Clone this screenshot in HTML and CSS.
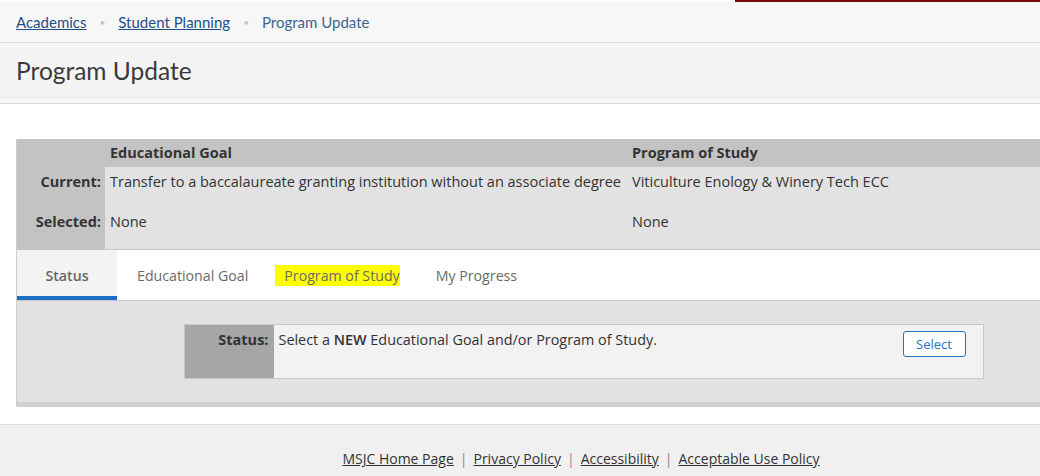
FILE: index.html
```html
<!DOCTYPE html>
<html lang="en">
<head>
<meta charset="utf-8">
<title>Program Update</title>
<link rel="stylesheet" href="styles.css">
</head>
<body>
<div class="page">
  <div class="topstrip"><div class="topspace"></div><div class="redbar"></div></div>
  <nav class="breadcrumb">
    <a href="#">Academics</a><span class="sep">•</span><a href="#">Student Planning</a><span class="sep">•</span><span class="crumb-current">Program Update</span>
  </nav>
  <header class="titlebar"><h1>Program Update</h1></header>
  <div class="titleshadow"></div>

  <main class="main">
    <section class="summary">
      <div class="sum-row sum-head">
        <div class="sum-label"></div>
        <div class="sum-cell goal">Educational Goal</div>
        <div class="sum-cell">Program of Study</div>
      </div>
      <div class="sum-row">
        <div class="sum-label">Current:</div>
        <div class="sum-cell goal">Transfer to a baccalaureate granting institution without an associate degree</div>
        <div class="sum-cell">Viticulture Enology &amp; Winery Tech ECC</div>
      </div>
      <div class="sum-row last">
        <div class="sum-label">Selected:</div>
        <div class="sum-cell goal">None</div>
        <div class="sum-cell">None</div>
      </div>
    </section>

    <div class="tabs">
      <div class="tab active">Status</div>
      <div class="tab">Educational Goal</div>
      <div class="tab"><span class="hl">Program of Study</span></div>
      <div class="tab">My Progress</div>
    </div>

    <section class="tabpanel">
      <div class="statusbox">
        <div class="status-label">Status:</div>
        <div class="status-body">
          <span>Select a <b>NEW</b> Educational Goal and/or Program of Study.</span>
          <button class="btn">Select</button>
        </div>
      </div>
    </section>
  </main>

  <footer class="footer">
    <a href="#">MSJC Home Page</a><span class="bar">|</span><a href="#">Privacy Policy</a><span class="bar">|</span><a href="#">Accessibility</a><span class="bar">|</span><a href="#">Acceptable Use Policy</a>
  </footer>
</div>
</body>
</html>
```

FILE: styles.css
```css
html, body {
  margin: 0;
  padding: 0;
  overflow: hidden;
  background: #fff;
}
body {
  font-family: "Open Sans", "Liberation Sans", sans-serif;
  font-size: 14px;
  color: #333;
}
.page {
  width: 1150px;
  height: 476px;
  display: flex;
  flex-direction: column;
}
.page > * { flex-shrink: 0; }
.topstrip {
  display: flex;
  height: 2px;
  background: #fff;
}
.topspace { width: 735px; }
.redbar { flex: 1; background: #7b0b0b; }

.breadcrumb {
  height: 40px;
  background: #f7f7f7;
  border-bottom: 1px solid #dcdcdc;
  display: flex;
  align-items: center;
  padding-left: 16px;
  font-family: "Lato", "Open Sans", sans-serif;
  font-size: 15px;
}
.breadcrumb a {
  color: #1d4f8a;
  text-decoration: underline;
}
.breadcrumb .sep {
  color: #c4c4c4;
  font-size: 10px;
  margin: 0 13px;
}
.crumb-current { color: #40658c; }

.titlebar {
  height: 54px;
  background: #f4f4f4;
  border-bottom: 1px solid #e9e9e9;
  display: flex;
  align-items: center;
  padding-left: 16px;
}
.titlebar h1 {
  margin: 0;
  font-family: "Lato", "Open Sans", sans-serif;
  font-weight: 400;
  font-size: 24.5px;
  color: #3a3a3a;
}
.titleshadow {
  height: 5px;
  background: #f6f6f6;
  border-bottom: 1px solid #d9d9d9;
}

.main {
  margin: 35px 0 0 16px;
  border-left: 1px solid #cfcfcf;
  display: flex;
  flex-direction: column;
}

.summary { background: #e2e2e2; border-bottom: 1px solid #c6c6c6; font-size: 14.5px; }
.sum-row {
  display: grid;
  grid-template-columns: 88px 522px 1fr;
  height: 40px;
}
.sum-row.last { height: 42px; }
.sum-head {
  height: 28px;
  background: #c3c3c3;
}
.sum-head .sum-cell {
  font-weight: 700;
  line-height: 28px;
  padding-top: 0;
}
.sum-label {
  background: #c3c3c3;
  font-weight: 700;
  text-align: right;
  padding: 5px 4px 0 0;
  line-height: 20px;
}
.sum-cell {
  padding: 5px 0 0 5px;
  line-height: 20px;
  white-space: nowrap;
}

.tabs {
  display: flex;
  background: #fff;
  height: 50px;
  border-bottom: 1px solid #c9c9c9;
}
.tab {
  padding: 0 16px 0 20px;
  display: flex;
  align-items: center;
  color: #6a6a6a;
  font-size: 14.2px;
  box-sizing: border-box;
}
.tab.active {
  width: 100px;
  justify-content: center;
  background: #f3f3f3;
  color: #666;
  font-weight: 600;
  border-bottom: 4px solid #1a6ec4;
  padding: 4px 0 0;
}
.hl {
  background: #ffff00;
  padding: 1px 0 1px 9px;
  margin-left: -9px;
}

.tabpanel {
  background: #e2e2e2;
  height: 78px;
  border-bottom: 5px solid #d1d1d1;
  display: flex;
  justify-content: center;
  padding-top: 23px;
}
.statusbox {
  width: 800px;
  height: 55px;
  box-sizing: border-box;
  border: 1px solid #c8c8c8;
  display: flex;
}
.status-label {
  width: 89px;
  background: #a6a6a6;
  font-weight: 700;
  text-align: right;
  padding: 5px 5px 0 0;
  box-sizing: border-box;
  line-height: 20px;
  font-size: 14.5px;
}
.status-body {
  flex: 1;
  background: #f2f2f2;
  padding: 5px 17px 0 5px;
  line-height: 20px;
  display: flex;
  justify-content: space-between;
  align-items: flex-start;
  font-size: 14.4px;
}
.status-body b { font-weight: 600; }
.btn {
  margin-top: 1px;
  width: 63px;
  height: 26px;
  background: #fff;
  border: 1px solid #2b6fbf;
  border-radius: 3px;
  color: #2b6fbf;
  font-family: "Open Sans", "Liberation Sans", sans-serif;
  font-size: 13px;
  padding: 0;
}

.footer {
  margin-top: 17px;
  flex: 1;
  background: #f0f0f0;
  border-top: 1px solid #dcdcdc;
  display: flex;
  justify-content: center;
  align-items: flex-start;
  padding: 24px 0 0 12px;
  font-size: 14px;
}
.footer a { color: #333; text-decoration: underline; }
.footer .bar { color: #888; margin: 0 6px; }
```
